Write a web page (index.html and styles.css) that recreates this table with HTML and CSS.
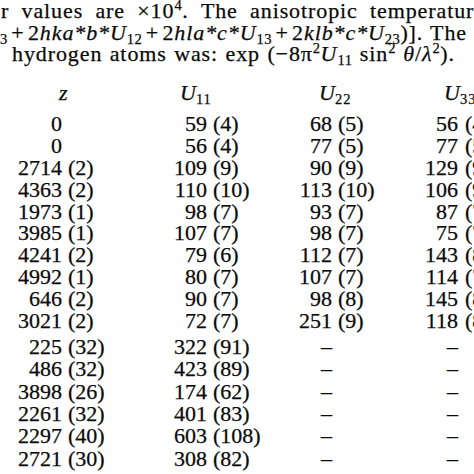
FILE: index.html
```html
<!DOCTYPE html>
<html>
<head>
<meta charset="utf-8">
<link rel="stylesheet" href="styles.css">
</head>
<body>
<div class="page">
  <div class="caption">
    <div class="line l1"><span>r</span><span>values</span><span>are</span><span>×10<sup>4</sup>.</span><span>The</span><span>anisotropic</span><span>temperature</span></div>
    <div class="line l2"><span><sub>3</sub></span><span>+</span><span>2<i>hka*b*U</i><sub>12</sub></span><span>+</span><span>2<i>hla*c*U</i><sub>13</sub></span><span>+</span><span>2<i>klb*c*U</i><sub>23</sub>)].</span><span class="gap"></span><span>The</span></div>
    <div class="line l3"><span>hydrogen</span><span>atoms</span><span>was:</span><span>exp</span><span>(−8π<sup>2</sup><i>U</i><sub>11</sub></span><span>sin<sup>2</sup></span><span><i>θ</i>/<i>λ</i><sup>2</sup>).</span></div>
  </div>
  <div class="table">
    <div class="head h1"><i>z</i></div>
    <div class="head h2"><i>U</i><sub>11</sub></div>
    <div class="head h3"><i>U</i><sub>22</sub></div>
    <div class="head h4"><i>U</i><sub>33</sub></div>

    <span class="n">0</span><span class="e"></span><span class="n">59</span><span class="e">(4)</span><span class="n">68</span><span class="e">(5)</span><span class="n">56</span><span class="e last">(4)</span>
    <span class="n">0</span><span class="e"></span><span class="n">56</span><span class="e">(4)</span><span class="n">77</span><span class="e">(5)</span><span class="n">77</span><span class="e last">(5)</span>
    <span class="n">2714</span><span class="e">(2)</span><span class="n">109</span><span class="e">(9)</span><span class="n">90</span><span class="e">(9)</span><span class="n">129</span><span class="e last">(9)</span>
    <span class="n">4363</span><span class="e">(2)</span><span class="n">110</span><span class="e">(10)</span><span class="n">113</span><span class="e">(10)</span><span class="n">106</span><span class="e last">(9)</span>
    <span class="n">1973</span><span class="e">(1)</span><span class="n">98</span><span class="e">(7)</span><span class="n">93</span><span class="e">(7)</span><span class="n">87</span><span class="e last">(7)</span>
    <span class="n">3985</span><span class="e">(1)</span><span class="n">107</span><span class="e">(7)</span><span class="n">98</span><span class="e">(7)</span><span class="n">75</span><span class="e last">(7)</span>
    <span class="n">4241</span><span class="e">(2)</span><span class="n">79</span><span class="e">(6)</span><span class="n">112</span><span class="e">(7)</span><span class="n">143</span><span class="e last">(8)</span>
    <span class="n">4992</span><span class="e">(1)</span><span class="n">80</span><span class="e">(7)</span><span class="n">107</span><span class="e">(7)</span><span class="n">114</span><span class="e last">(7)</span>
    <span class="n">646</span><span class="e">(2)</span><span class="n">90</span><span class="e">(7)</span><span class="n">98</span><span class="e">(8)</span><span class="n">145</span><span class="e last">(8)</span>
    <span class="n">3021</span><span class="e">(2)</span><span class="n">72</span><span class="e">(7)</span><span class="n">251</span><span class="e">(9)</span><span class="n">118</span><span class="e last">(8)</span>
    <span class="n">225</span><span class="e">(32)</span><span class="n">322</span><span class="e">(91)</span><span class="n">–</span><span class="e"></span><span class="n">–</span><span class="e"></span>
    <span class="n">486</span><span class="e">(32)</span><span class="n">423</span><span class="e">(89)</span><span class="n">–</span><span class="e"></span><span class="n">–</span><span class="e"></span>
    <span class="n">3898</span><span class="e">(26)</span><span class="n">174</span><span class="e">(62)</span><span class="n">–</span><span class="e"></span><span class="n">–</span><span class="e"></span>
    <span class="n">2261</span><span class="e">(32)</span><span class="n">401</span><span class="e">(83)</span><span class="n">–</span><span class="e"></span><span class="n">–</span><span class="e"></span>
    <span class="n">2297</span><span class="e">(40)</span><span class="n">603</span><span class="e">(108)</span><span class="n">–</span><span class="e"></span><span class="n">–</span><span class="e"></span>
    <span class="n">2721</span><span class="e">(30)</span><span class="n">308</span><span class="e">(82)</span><span class="n">–</span><span class="e"></span><span class="n">–</span><span class="e"></span>
  </div>
</div>
</body>
</html>
```
FILE: styles.css
```css
html, body {
  margin: 0;
  padding: 0;
  background: #ffffff;
}
.page {
  width: 474px;
  height: 474px;
  overflow: hidden;
  font-family: "Liberation Serif", "Times New Roman", serif;
  font-size: 22px;
  line-height: 21.67px;
  color: #0a0a0a;
  -webkit-text-stroke: 0.25px #0a0a0a;
}
.line {
  display: flex;
  justify-content: space-between;
  white-space: nowrap;
  letter-spacing: 0.9px;
}
.l1 {
  width: 484px;
  padding-left: 1px;
}
.l2 {
  width: 467px;
}
.l2 .gap {
  width: 0;
}
.l3 {
  width: 443px;
  padding-left: 12px;
}
sub, sup {
  font-size: 0.66em;
  line-height: 0;
  letter-spacing: 0.5px;
}
sub {
  vertical-align: -0.3em;
}
sup {
  vertical-align: 0.55em;
}
.table {
  margin-top: 16.7px;
  display: grid;
  grid-template-columns: 62px 88px 57px 68px 57px 68px 58px 1fr;
  grid-template-rows: 31.5px repeat(9, 21.85px) 26px repeat(5, 22.4px) 22.4px;
}
.head {
  grid-column: span 2;
}
.h1 { padding-left: 59px; }
.h2 { padding-left: 30px; }
.h3 { padding-left: 44px; }
.h4 { padding-left: 44px; }
.head sub {
  letter-spacing: 1px;
}
.n {
  text-align: right;
  white-space: nowrap;
}
.e {
  padding-left: 6px;
  white-space: nowrap;
}
.e.last {
  padding-left: 7px;
}
```
